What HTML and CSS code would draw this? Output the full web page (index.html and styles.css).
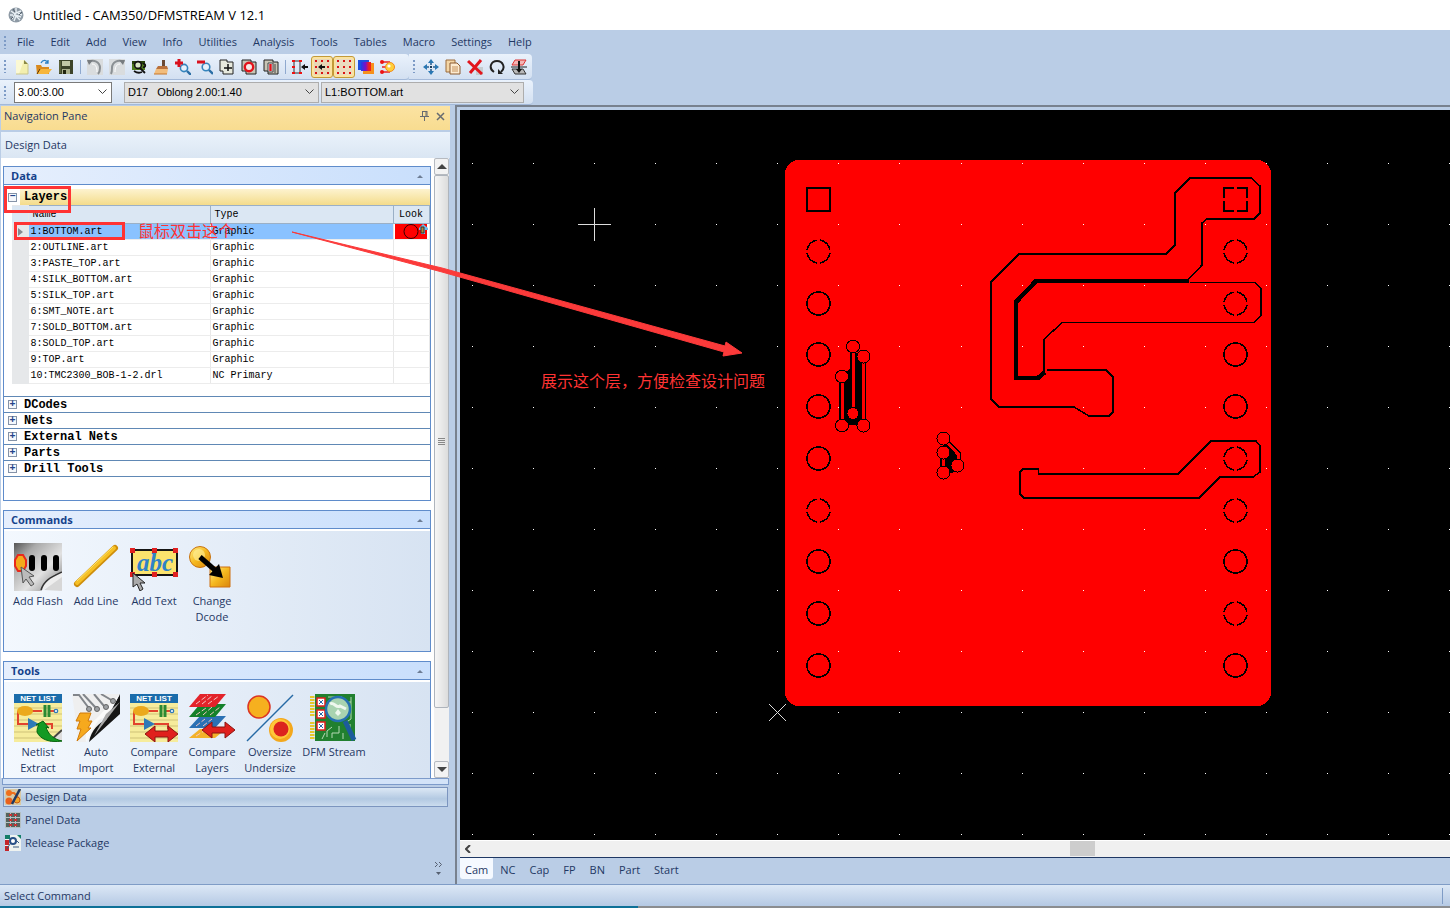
FILE: index.html
```
<!DOCTYPE html>
<html lang="en">
<head>
  <meta charset="UTF-8" />
  <meta name="viewport" content="width=device-width, initial-scale=1.0" />
  <title>Untitled - CAM350/DFMSTREAM V 12.1</title>
  <link rel="stylesheet" href="styles.css">
</head>
<body>
<div class="app">
  <header class="titlebar">
    <svg width="16" height="16" viewBox="0 0 16 16"><circle cx="8" cy="8" r="7.5" fill="#8e9aa5"/><path d="M3 4l4 3-3 5M8 1v5l5-2M7 8l6 2M6 14l2-5 4 4M2 8h3M10 6l4 2" stroke="#e9f0f5" stroke-width="1.4" fill="none"/><path d="M5 2l2 3M11 8l3-3M5 10l-2 2" stroke="#55616d" fill="none"/></svg>
    <span>Untitled - CAM350/DFMSTREAM V 12.1</span>
  </header>

  <nav class="menubar">
    <span class="grip"></span>
    <button>File</button><button>Edit</button><button>Add</button><button>View</button><button>Info</button><button>Utilities</button><button>Analysis</button><button>Tools</button><button>Tables</button><button>Macro</button><button>Settings</button><button>Help</button>
  </nav>

  <div class="toolrow">
    <div class="toolbar main-tools">
      <span class="grip"></span>
      <button aria-label="New"><svg viewBox="0 0 16 16"><path d="M2 1h8l4 4v10H2z" fill="#f3efae"/><path d="M2 1h8l-5 14H2z" fill="#fbf9d4"/><path d="M10 1l4 4h-4z" fill="#8a8845"/><path d="M14 5v10H2" fill="none" stroke="#c9c58c"/></svg></button>
      <button aria-label="Open"><svg viewBox="0 0 16 16"><path d="M0 6h5l1 2h7v7H1z" fill="#d98a1e"/><path d="M4 10h12l-4 5H1z" fill="#f7b63c"/><path d="M1 15l3-5" stroke="#5b3a08"/><path d="M5 4c2-4 6-3 7 0M12 1v3H9" fill="none" stroke="#2a7fc4" stroke-width="1.3"/></svg></button>
      <button aria-label="Save"><svg viewBox="0 0 16 16"><path d="M1 1h14v14H1z" fill="#3d4429"/><path d="M4 2h8v5H4z" fill="#c3c9a6"/><path d="M4 10h8v5H4z" fill="#aab08c"/><path d="M5 11h3v4H5z" fill="#20240f"/><path d="M2 2v12" stroke="#78804e"/></svg></button>
      <i class="sep"></i>
      <button aria-label="Undo"><svg viewBox="0 0 16 16"><path d="M0 0h16v16H0z" fill="#d9dcde"/><path d="M1 3c6-3 12 0 12 6 0 3-1 5-2 6" fill="none" stroke="#8b9094" stroke-width="2"/><path d="M0 1l6 0-4 5z" fill="#777c80"/><path d="M5 5c4 0 5 4 5 8" stroke="#fff" fill="none"/></svg></button>
      <button aria-label="Redo"><svg viewBox="0 0 16 16"><path d="M0 0h16v16H0z" fill="#d9dcde"/><path d="M15 3C9 0 3 3 3 9c0 3 0 4-1 6" fill="none" stroke="#8b9094" stroke-width="2"/><path d="M16 1l-6 0 4 5z" fill="#777c80"/><path d="M11 5c-4 0-5 4-5 8" stroke="#fff" fill="none"/></svg></button>
      <button aria-label="Find"><svg viewBox="0 0 16 16"><path d="M1 2h13v9H1z" fill="#4f7d1e"/><path d="M1 2h13v3H1z" fill="#27400d"/><circle cx="7" cy="6" r="3.4" fill="#d8e7c4" stroke="#111" stroke-width="1.6"/><path d="M9 9l5 5M12 5c3-1 3 4 0 3M3 12c3 2 6 2 8 1" stroke="#111" stroke-width="1.8" fill="none"/></svg></button>
      <button aria-label="Redraw"><svg viewBox="0 0 16 16"><path d="M9 1h3v7H9z" fill="#6b4a35"/><path d="M5 7h9l1 3H3z" fill="#b9713c"/><path d="M3 10h12l-1 5H1z" fill="#f2bd7c"/><path d="M1 15h13" stroke="#c4762e"/></svg></button>
      <button aria-label="Zoom in"><svg viewBox="0 0 16 16"><circle cx="9" cy="9" r="3.6" fill="#e5f1fb" stroke="#3585bd" stroke-width="1.6"/><path d="M12 12l4 4" stroke="#2a6ea5" stroke-width="2.4"/><path d="M4 0v8M0 4h8" stroke="#d9111d" stroke-width="3"/></svg></button>
      <button aria-label="Zoom out"><svg viewBox="0 0 16 16"><circle cx="9" cy="8" r="3.8" fill="#e5f1fb" stroke="#3585bd" stroke-width="1.6"/><path d="M12 11l4 4" stroke="#2a6ea5" stroke-width="2.4"/><path d="M0 3h8" stroke="#d9111d" stroke-width="3"/></svg></button>
      <button aria-label="Zoom window"><svg viewBox="0 0 16 16"><path d="M1 1h7v2h6v12H4v-3H1z" fill="#e7e9dd" stroke="#222"/><path d="M9 5v7M5 9h8" stroke="#111" stroke-width="1.5"/></svg></button>
      <button aria-label="Zoom all"><svg viewBox="0 0 16 16"><path d="M1 1h9v2h5v12H5v-3H1z" fill="#c8c5b5" stroke="#222"/><circle cx="8" cy="8" r="4.2" fill="#f6e9e5" stroke="#e3121a" stroke-width="2.4"/></svg></button>
      <button aria-label="Zoom previous"><svg viewBox="0 0 16 16"><path d="M1 1h9v2h5v12H5v-3H1z" fill="#c8c5b5" stroke="#222"/><path d="M5 4h5v9H5zM12 5v9" fill="#eee" stroke="#444"/><path d="M7.500 5v7" stroke="#e3121a" stroke-width="2.4"/></svg></button>
      <i class="sep"></i>
      <button aria-label="Snap object"><svg viewBox="0 0 16 16"><path d="M2 2v12M8 2v12M1 2h8M1 14h8" fill="none" stroke="#333"/><path d="M0 1h3v2H0zM7 1h3v2H7zM0 7h3v2H0zM0 13h3v2H0zM7 13h3v2H7z" fill="#e11"/><path d="M9 8l4-3v2h3v2h-3v2z" fill="#111"/></svg></button>
      <button class="on" aria-label="Snap grid"><svg viewBox="0 0 16 16"><path d="M0 0h16v16H0z" fill="#e8d6b6"/><path d="M1 2h14M1 8h14M1 14h14" stroke="#d91313" stroke-width="2" stroke-dasharray="2 4"/><path d="M4 8l4-3v2h3v2H8v2z" fill="#111"/></svg></button>
      <button class="on" aria-label="Grid"><svg viewBox="0 0 16 16"><path d="M0 0h16v16H0z" fill="#ecdcc0"/><path d="M1 2h14M1 8h14M1 14h14" stroke="#d91313" stroke-width="2" stroke-dasharray="2 4"/></svg></button>
      <button aria-label="Colors"><svg viewBox="0 0 16 16"><defs><linearGradient id="mix" x2="1"><stop stop-color="#1c3fe8"/><stop offset=".45" stop-color="#7a10c8"/><stop offset=".8" stop-color="#f0201c"/></linearGradient></defs><path d="M0 1h11v10H0z" fill="#1c4fe0"/><path d="M5 4h11v11H5z" fill="#f6911c"/><path d="M3 3h10v9H3z" fill="url(#mix)"/></svg></button>
      <button aria-label="Highlight"><svg viewBox="0 0 16 16"><path d="M2 3h8M2 13h8M2 8h6" stroke="#e22" stroke-width="1.6"/><circle cx="2" cy="3" r="2" fill="#e11"/><circle cx="2" cy="13" r="2" fill="#e11"/><circle cx="10" cy="8" r="4.500" fill="#ffcf3a" stroke="#f28a1c"/><circle cx="9" cy="7" r="1.6" fill="#fff"/></svg></button>
    </div>
    <div class="toolbar">
      <span class="grip"></span>
      <button aria-label="Move"><svg viewBox="0 0 16 16"><path d="M8 2v12M2 8h12" stroke="#2b6090" stroke-width="1.6" stroke-dasharray="4 4"/><path d="M8 0l3 4H5zM8 16l3-4H5zM0 8l4-3v6zM16 8l-4-3v6z" fill="#2977b3"/><path d="M7 7h2v2H7z" fill="#17395a"/></svg></button>
      <button aria-label="Copy"><svg viewBox="0 0 16 16"><path d="M1 1h9v12H1z" fill="#f4d6a6" stroke="#9a6a3a"/><path d="M5 4h7l3 3v8H5z" fill="#fdebd0" stroke="#8a5a30"/><path d="M7 8h6M7 10h6M7 12h6" stroke="#c5925c"/></svg></button>
      <button aria-label="Delete"><svg viewBox="0 0 16 16"><path d="M9 8h7v8H9z" fill="#c6ccd0"/><path d="M1 2l14 13M14 1L3 14" stroke="#e2151d" stroke-width="3"/></svg></button>
      <button aria-label="Rotate"><svg viewBox="0 0 16 16"><path d="M5 13C-1 9 2 2 8 2s9 7 4 11" fill="none" stroke="#222" stroke-width="2"/><path d="M9 10v5h5z" fill="#222"/></svg></button>
      <button aria-label="Mirror"><svg viewBox="0 0 16 16"><path d="M4 1h11l-3 5H1z" fill="#f3b5b5" stroke="#d33"/><path d="M0 8h16" stroke="#222"/><path d="M1 10h11l3 5H4z" fill="#b8b8b8" stroke="#333"/><path d="M8 2v10" stroke="#111" stroke-width="2"/><path d="M5 10h6l-3 4z" fill="#111"/></svg></button>
    </div>
  </div>

  <div class="toolrow">
    <div class="toolbar combos">
      <span class="grip"></span>
      <select class="combo grid-size" aria-label="Grid"><option>3.00:3.00</option></select>
      <select class="combo dcode" aria-label="Dcode"><option>D17 &nbsp; Oblong 2.00:1.40</option></select>
      <select class="combo layer" aria-label="Layer"><option>L1:BOTTOM.art</option></select>
    </div>
  </div>

  <main class="workspace">
    <aside class="pane">
      <div class="pane-title">
        <span>Navigation Pane</span>
        <button aria-label="Pin"><svg width="9" height="10" viewBox="0 0 9 10"><path d="M2.500 0v5M2 .5h5M6 0v5M7 0v5M0 5.500h9M4.500 6v4" stroke="#666b70" fill="none"/></svg></button>
        <button aria-label="Close"><svg width="9" height="9" viewBox="0 0 9 9"><path d="M1 1l7 7M8 1L1 8" stroke="#666b70" stroke-width="1.5"/></svg></button>
      </div>
      <div class="pane-sub">Design Data</div>

      <div class="pane-body">
        <div class="sections">
          <section class="section">
            <h2>Data<i class="fold"></i></h2>
            <div class="group open"><button class="toggle" aria-label="Collapse Layers">−</button><span>Layers</span></div>
            <table class="layers">
              <thead>
                <tr><th class="gutter"></th><th class="name">Name</th><th>Type</th><th class="look">Look</th></tr>
              </thead>
              <tbody>
                <tr class="selected"><td class="gutter"><i class="current"></i></td><td>1:BOTTOM.art</td><td>Graphic</td><td class="swatch"><svg width="33" height="15" viewBox="0 0 33 15"><path d="M0 0h32v15H0z" fill="#f00"/><circle cx="16" cy="7.500" r="7" fill="none" stroke="#300"/><path d="M24 4l4-4 5 4v2h-3v4h-4V6h-2z" fill="#6fb9e8"/><path d="M26 3h3v6h-3z" fill="#b08a3a" stroke="#333"/></svg></td></tr>
                <tr><td class="gutter"></td><td>2:OUTLINE.art</td><td>Graphic</td><td></td></tr>
                <tr><td class="gutter"></td><td>3:PASTE_TOP.art</td><td>Graphic</td><td></td></tr>
                <tr><td class="gutter"></td><td>4:SILK_BOTTOM.art</td><td>Graphic</td><td></td></tr>
                <tr><td class="gutter"></td><td>5:SILK_TOP.art</td><td>Graphic</td><td></td></tr>
                <tr><td class="gutter"></td><td>6:SMT_NOTE.art</td><td>Graphic</td><td></td></tr>
                <tr><td class="gutter"></td><td>7:SOLD_BOTTOM.art</td><td>Graphic</td><td></td></tr>
                <tr><td class="gutter"></td><td>8:SOLD_TOP.art</td><td>Graphic</td><td></td></tr>
                <tr><td class="gutter"></td><td>9:TOP.art</td><td>Graphic</td><td></td></tr>
                <tr><td class="gutter"></td><td>10:TMC2300_BOB-1-2.drl</td><td>NC Primary</td><td></td></tr>
              </tbody>
            </table>
            <div class="groups">
              <div class="group"><button class="toggle" aria-label="Expand DCodes">+</button><span>DCodes</span></div>
              <div class="group"><button class="toggle" aria-label="Expand Nets">+</button><span>Nets</span></div>
              <div class="group"><button class="toggle" aria-label="Expand External Nets">+</button><span>External Nets</span></div>
              <div class="group"><button class="toggle" aria-label="Expand Parts">+</button><span>Parts</span></div>
              <div class="group"><button class="toggle" aria-label="Expand Drill Tools">+</button><span>Drill Tools</span></div>
            </div>
          </section>

          <section class="section">
            <h2>Commands<i class="fold"></i></h2>
            <div class="tiles">
              <button class="tile">
                <svg viewBox="0 0 48 48"><defs><linearGradient id="steel" x2="1" y2="1"><stop stop-color="#555"/><stop offset=".25" stop-color="#aaa"/><stop offset=".6" stop-color="#e2e2e2"/><stop offset="1" stop-color="#777"/></linearGradient><linearGradient id="gold" x2="1" y2="1"><stop stop-color="#fff08a"/><stop offset=".5" stop-color="#f5b81e"/><stop offset="1" stop-color="#d9850d"/></linearGradient></defs><path d="M0 0h48v29L27 48H0z" fill="url(#steel)"/><path d="M48 28C43 32 35 30 27 47l21-8z" fill="#eee"/><path d="M27 47c3-9 8-12 21-18" fill="none" stroke="#333" stroke-width="1.500"/><path d="M30 47l18-13v14z" fill="#d7d7d7"/><path d="M4 12h5l3 5v6l-3 5H4l-3-5v-6z" fill="#f3aa1c" stroke="#e8291c" stroke-width="2"/><rect x="15" y="12" width="6" height="16" rx="3"/><rect x="27" y="12" width="6" height="16" rx="3"/><rect x="39" y="12" width="6" height="16" rx="3"/><path d="M7 24l13 9-5 1 5 7-3 2-5-7-3 4z" fill="#bbb" stroke="#555"/></svg>
                Add Flash
              </button>
              <button class="tile">
                <svg viewBox="0 0 48 48"><path d="M5 41L43 5" stroke="#ce8e0c" stroke-width="6" stroke-linecap="round"/><path d="M5 40L42 5" stroke="#f6c025" stroke-width="4" stroke-linecap="round"/><path d="M5 38L41 4" stroke="#fae06a"/></svg>
                Add Line
              </button>
              <button class="tile">
                <svg viewBox="0 0 48 48"><path d="M2 7h45v25H2z" fill="#fbe36d" stroke="#151515" stroke-width="2"/><path d="M0 5h5v5H0zM22 5h5v5h-5zM43 5h5v5h-5zM0 29h5v5H0zM22 29h5v5h-5zM43 29h5v5h-5z" fill="#e02020"/><text x="7" y="28" font-family="Liberation Serif" font-size="25" font-style="italic" font-weight="bold" fill="#2f82c8">abc</text><path d="M3 30v14l4-3 3 7 3-2-3-6h5z" fill="#aaa" stroke="#222"/></svg>
                Add Text
              </button>
              <button class="tile">
                <svg viewBox="0 0 48 48"><path d="M22 24h20v20H22z" fill="url(#gold)" stroke="#ce7110"/><circle cx="12" cy="14" r="10.500" fill="url(#gold)" stroke="#c9730f"/><circle cx="11" cy="12" r="6" fill="#fff3a0" opacity=".6"/><path d="M12 14l16 14" stroke="#000" stroke-width="5"/><path d="M35 35l-4-14-10 11z"/></svg>
                Change Dcode
              </button>
            </div>
          </section>

          <section class="section">
            <h2>Tools<i class="fold"></i></h2>
            <div class="tiles">
              <button class="tile">
                <svg viewBox="0 0 48 48"><g id="netlist"><path d="M0 0h48v48H0z" fill="#f6ec9c"/><path d="M0 14h48M0 20h48M0 26h48M0 32h48M0 38h48M0 44h48" stroke="#cfc278"/><path d="M0 0h48v9H0z" fill="#1a6cab"/><text x="24" y="7" text-anchor="middle" font-family="Liberation Sans" font-size="8" font-weight="bold" fill="#fff">NET LIST</text><path d="M4 17h24M4 17v13h10M24 30h14v5" fill="none" stroke="#e2442d" stroke-width="2"/><path d="M36 17h6" stroke="#e2442d" stroke-width="2"/><ellipse cx="11" cy="17" rx="8" ry="5" fill="#eba91d"/><path d="M31 11v12M35 11v12" stroke="#2b8a32" stroke-width="3"/><path d="M14 24l11 6-11 6z" fill="#2f79b8"/><circle cx="42" cy="17" r="1.700" fill="#fff" stroke="#2f79b8" stroke-width="1.300"/></g><path d="M48 37v11H36z" fill="#ddd"/><path d="M36 47L48 36" stroke="#444" stroke-width="2"/><path d="M23 38c0-4 1-6 2-7h-3l7-4 6 7-3-1c2 7 7 12 16 14-13 2-22-2-25-9z" fill="#139a23" stroke="#08650f"/></svg>
                Netlist Extract
              </button>
              <button class="tile">
                <svg viewBox="0 0 48 48"><path d="M0 0h48L14 48H6l-2-20z" fill="#efefef"/><path d="M48 0v20L17 48c2-12 11-20 17-22z" fill="#151515"/><path d="M48 0L34 25c-9-5-13 14-20 23-2-12 6-20 10-23z" fill="#fafafa"/><path d="M48 8L22 42l12-22z" fill="#aaa"/><path d="M1 1h6l9 12M11 0l13 14M22 0l10 12M29 0l12 7" fill="none" stroke="#81858a" stroke-width="2"/><g fill="#9da0a4" stroke="#666"><circle cx="17" cy="15" r="2.500"/><circle cx="25" cy="15" r="2.500"/><circle cx="34" cy="13" r="2.500"/><circle cx="41" cy="7" r="2.500"/></g><path d="M8 19h11l-3 8h4l-4 7h3L5 47l4-12H5l3-8H4z" fill="#f6a91d" stroke="#d07b0b"/></svg>
                Auto Import
              </button>
              <button class="tile">
                <svg viewBox="0 0 48 48"><use href="#netlist"/><path d="M15 40l10-8v5h13v-5l10 8-10 8v-5H25v5z" fill="#e0201d" stroke="#8a1411"/></svg>
                Compare External
              </button>
              <button class="tile">
                <svg viewBox="0 0 48 48"><path d="M12 35h26L27 44H1z" fill="#f3b22a"/><path d="M12 22h26L27 34H1z" fill="#2b71b4"/><path d="M12 10h26L27 23H1z" fill="#14812a"/><path d="M12 0h26L27 13H1z" fill="#e3232a"/><path d="M8 10L20 1M14 10l10-8M20 10l11-8M8 21l10-7M15 21l9-8M22 21l10-8M8 32l9-7M15 32l9-7M8 42l8-5" fill="none" stroke="#f4c6c3" stroke-width="1" stroke-dasharray="5 2"/><path d="M14 36l10-8v5h13v-5l10 8-10 8v-5H24v5z" fill="#e0201d" stroke="#8a1411"/></svg>
                Compare Layers
              </button>
              <button class="tile">
                <svg viewBox="0 0 48 48"><path d="M1 47L47 1" stroke="#266aa5" stroke-width="1.500"/><circle cx="13" cy="13" r="11" fill="#f6b01f" stroke="#dc3523" stroke-width="1.500"/><circle cx="35" cy="36" r="12" fill="#f3a81d"/><circle cx="34" cy="35" r="10" fill="#ffc73a"/><circle cx="35" cy="35" r="7.500" fill="#dc231e"/></svg>
                Oversize Undersize
              </button>
              <button class="tile wide">
                <svg viewBox="0 0 48 48"><path d="M5 0h40v47H5z" fill="#21802f"/><path d="M2 2v20M2 28v18" stroke="#e6c92b" stroke-width="5" stroke-dasharray="2 1"/><path d="M18 3h9v5M31 2v6h10M41 3v22l-6 4M17 43v-6l5-4M22 44v-5h7v-7M33 45v-6M12 45l3-6M40 30v8" fill="none" stroke="#b5d8b5"/><path d="M7 4h8v8H7zM7 16h8v8H7zM7 28h8v8H7z" fill="#fff" stroke="#e01f1f" stroke-width="1.500"/><path d="M9 6l4 4M13 6l-4 4M9 18l4 4M13 18l-4 4M9 30l4 4M13 30l-4 4" stroke="#2a66a8"/><path d="M35 27l9 19" stroke="#1c5c9c" stroke-width="5"/><circle cx="28" cy="15" r="12" fill="#a8d3b0" stroke="#2470b2" stroke-width="2.500"/><path d="M20 10c4-3 6 5 10 2l6 3" fill="none" stroke="#eef8ee" stroke-width="3"/><path d="M28 15l3 4-3 3-3-3z" fill="#eef8ee"/></svg>
                DFM Stream
              </button>
            </div>
          </section>
        </div>
        <div class="vscroll">
          <button aria-label="Scroll up"><i class="tri up"></i></button>
          <span class="vthumb"></span>
          <button aria-label="Scroll down"><i class="tri down"></i></button>
        </div>
      </div>

      <div class="splitter"></div>
      <div class="pane-nav">
        <button class="active"><svg viewBox="0 0 16 16"><path d="M0 0h16v16H0z" fill="#d8c9a4"/><circle cx="4" cy="4" r="3" fill="#ee6f1d"/><circle cx="4" cy="12" r="3.500" fill="#e9601c"/><circle cx="12" cy="11" r="3" fill="#f2a52a" stroke="#c85a0d"/><path d="M5 4h4l4 4" stroke="#ee6f1d" stroke-width="2" fill="none"/><path d="M15 0L7 15" stroke="#203a62" stroke-width="2.500"/></svg>Design Data</button>
        <button><svg viewBox="0 0 16 16"><path d="M0 0h16v16H0z" fill="#b4bfc2"/><path d="M1 1h4v4H1zM6 1h4v4H6zM11 1h4v4h-4zM1 6h4v4H1zM6 6h4v4H6zM11 6h4v4h-4zM1 11h4v4H1zM6 11h4v4H6zM11 11h4v4h-4z" fill="#56635f"/><path d="M4 3h3M9 3h3M4 8h3M9 8h3M4 13h3M9 13h3" stroke="#c73131" stroke-width="2"/></svg>Panel Data</button>
        <button><svg viewBox="0 0 16 16"><path d="M0 0h16v16H0z" fill="#eef2f0"/><path d="M0 0h5v4H0zM12 0h4v4z" fill="#137d68"/><path d="M2 5v11" stroke="#c4242b" stroke-width="4" stroke-dasharray="5 1"/><circle cx="8" cy="6" r="3" fill="#fff" stroke="#284f86" stroke-width="2"/><path d="M5 9l-3 5M8 12h6M10 4l4 4" stroke="#395a80"/></svg>Release Package</button>
        <div class="more"><svg width="9" height="14" viewBox="0 0 9 14"><path d="M1 1l2.500 2.500L1 6M5 1l2.500 2.500L5 6" fill="none" stroke="#566071"/><path d="M2 11h5l-2.500 3z" fill="#566071"/></svg></div>
      </div>
    </aside>

    <section class="viewer">
      <svg class="board">
        <defs>
          <pattern id="dots" x="472" y="163" width="61" height="61" patternUnits="userSpaceOnUse"><path d="M0 0h1v1H0z" fill="#fff"/></pattern>
          <pattern id="dots-right" x="473" y="163" width="61" height="61" patternUnits="userSpaceOnUse"><path d="M0 0h1v1H0z" fill="#fff"/></pattern>
          <circle id="pad" r="11.500" fill="none" stroke="#000" stroke-width="1.500"/>
          <circle id="thermal" r="11.500" fill="none" stroke="#000" stroke-width="1.500" stroke-dasharray="15 3.070" stroke-dashoffset="-1.500"/>
        </defs>
        <g transform="translate(-460 -110)">
          <rect x="785" y="160" width="486" height="546" rx="14" fill="#f00"/>
          <rect x="460" y="110" width="470" height="1000" fill="url(#dots)"/>
          <rect x="930" y="110" width="2000" height="1000" fill="url(#dots-right)"/>

          <!-- left header -->
          <path d="M807 188h23v23h-23z" fill="none" stroke="#000" stroke-width="1.500"/>
          <use href="#thermal" x="818.500" y="251.500"/>
          <use href="#pad" x="818.500" y="303.500"/>
          <use href="#pad" x="818.500" y="354.500"/>
          <use href="#pad" x="818.500" y="406.500"/>
          <use href="#pad" x="818.500" y="458.500"/>
          <use href="#thermal" x="818.500" y="510.500"/>
          <use href="#pad" x="818.500" y="561.500"/>
          <use href="#pad" x="818.500" y="613.500"/>
          <use href="#pad" x="818.500" y="665.500"/>

          <!-- right header -->
          <path d="M1234 188h-10v10M1237 188h10v10M1234 211h-10v-10M1237 211h10v-10" fill="none" stroke="#000" stroke-width="1.500"/>
          <use href="#thermal" x="1235.500" y="251.500"/>
          <use href="#thermal" x="1235.500" y="303.500"/>
          <use href="#pad" x="1235.500" y="354.500"/>
          <use href="#pad" x="1235.500" y="406.500"/>
          <use href="#thermal" x="1235.500" y="458.500"/>
          <use href="#thermal" x="1235.500" y="510.500"/>
          <use href="#pad" x="1235.500" y="561.500"/>
          <use href="#thermal" x="1235.500" y="613.500"/>
          <use href="#pad" x="1235.500" y="665.500"/>

          <!-- power traces -->
          <g fill="none" stroke="#000" stroke-width="1.500">
            <path d="M1188 280l14-15v-42l5-4h47l6-6v-27l-9-8h-61l-15 15v52l-9 9h-147l-28 28v117l8 8h75l15 9h20l4-4v-35l-7-7h-59"/>
            <path d="M1190 282.500h65l6 6v27l-7 7h-192l-18 17v32l-6 6"/>
            <path d="M1189 281h-153l-20 21v76h22l7-6" stroke-width="4.500"/>
            <path d="M1039 474h139l33-33h45l4 5v26l-7 5h-33l-21 21h-175l-4-4v-22l3-3h15z"/>
          </g>

          <!-- left jumper cluster -->
          <path d="M851 353h5l9 8v60l-5 4h-14l-6-5v-42l10-10z"/>
          <path d="M842 377v48M853 347v66M863 356v69" stroke="#000" stroke-width="6"/>
          <path d="M842 377v48M853 347v66M863 356v69" stroke="#f00" stroke-width="3"/>
          <g fill="#f00" stroke="#000"><circle cx="853" cy="346.500" r="6.500"/><circle cx="863.500" cy="356.500" r="6.500"/><circle cx="842" cy="376.500" r="6.500"/><circle cx="853" cy="413.500" r="6"/><circle cx="842" cy="425.500" r="6.500"/><circle cx="863.500" cy="425.500" r="6.500"/></g>

          <!-- centre jumper cluster -->
          <path d="M943 445h8l9 10v12l-8 6h-9z"/>
          <path d="M943 438l15 16v10M943 452v20" fill="none" stroke="#000" stroke-width="6"/>
          <path d="M943 438l15 16v10M943 452v20" fill="none" stroke="#f00" stroke-width="3"/>
          <g fill="#f00" stroke="#000"><circle cx="943.500" cy="438.500" r="6.500"/><circle cx="943.500" cy="452.500" r="6.500"/><circle cx="957.500" cy="465.500" r="6.500"/><circle cx="943.500" cy="472.500" r="6.500"/></g>

          <path d="M578 224.500h33M594.500 208v33M769 704l17 17M786 704l-17 17" stroke="#ddd"/>
        </g>
      </svg>
      <div class="hscroll"><button aria-label="Scroll left"><svg width="6" height="8" viewBox="0 0 6 8"><path d="M5 0L1 4l4 4" fill="none" stroke="#444" stroke-width="2"/></svg></button><span class="track"><span class="hthumb"></span></span></div>
      <div class="tabs">
        <button class="active">Cam</button><button>NC</button><button>Cap</button><button>FP</button><button>BN</button><button>Part</button><button>Start</button>
      </div>
    </section>
  </main>

  <footer class="statusbar">Select Command<i class="end"></i></footer>
  <div class="desktop-edge"></div>

  <!-- markup notes over the window -->
  <div class="mark mark-layers"></div>
  <div class="mark mark-bottom"></div>
  <div class="note note-click">鼠标双击这个</div>
  <div class="note note-view">展示这个层，方便检查设计问题</div>
  <svg class="arrow" width="452" height="130" viewBox="0 0 452 130"><path d="M1 1l150 36 283 78 1-4 16 11-19 3 1-4L151 41z" fill="#fb3a3a" stroke="#fb3a3a"/></svg>
</div>
</body>
</html>
```
FILE: styles.css
```
* {
  box-sizing: border-box;
}

body {
  margin: 0;
  font-family: "Open Sans", "Noto Sans", sans-serif;
  font-size: 11px;
  line-height: 16px;
  color: #1f3864;
}

button {
  font: inherit;
  color: inherit;
  background: none;
  border: 0;
  padding: 0;
}

svg {
  display: block;
  flex-shrink: 0;
}

.app {
  position: relative;
  display: flex;
  flex-direction: column;
  height: 100vh;
  overflow: hidden;
  background: #bacde6;
}

.titlebar {
  display: flex;
  align-items: center;
  gap: 9px;
  height: 30px;
  padding-left: 8px;
  background: #fff;
  color: #000;
  font-size: 13px;
}

.menubar {
  display: flex;
  align-items: center;
  height: 24px;
}

.menubar button {
  padding: 0 8px;
}

.grip {
  width: 3px;
  height: 13px;
  margin: 0 4px;
  background: repeating-linear-gradient(#7d9bc6 0 2px, transparent 2px 4px);
  background-size: 2px 13px;
  background-repeat: no-repeat;
}

.menubar .grip {
  margin-right: 2px;
}

/* toolbars */
.toolrow {
  display: flex;
  height: 25px;
}

.menubar + .toolrow {
  height: 26px;
}

.toolbar {
  display: flex;
  align-items: center;
  padding-right: 2px;
  background: linear-gradient(#eaf2fc, #d3e0f1);
  border-bottom: 1px solid #a3b9d9;
  border-radius: 0 4px 4px 0;
}

.main-tools {
  padding-right: 10px;
}

.toolbar button {
  display: flex;
  align-items: center;
  justify-content: center;
  width: 22px;
  height: 22px;
}

.toolbar button svg {
  width: 16px;
  height: 16px;
}

.toolbar .on {
  background: #fbe3a0;
  border: 1px solid #c39a38;
  border-radius: 3px;
}

.sep {
  width: 1px;
  height: 14px;
  margin: 0 3px;
  background: #8fa9cf;
}

.combos {
  padding-right: 9px;
}

.combo {
  appearance: none;
  height: 21px;
  padding: 0 3px;
  border: 1px solid #adadad;
  border-radius: 0;
  background: #e1e1e1 url("data:image/svg+xml,%3Csvg xmlns='http://www.w3.org/2000/svg' width='9' height='6'%3E%3Cpath d='M.5.5l4 4 4-4' fill='none' stroke='%23444'/%3E%3C/svg%3E") no-repeat right 4px center;
  color: #000;
  font-family: "Liberation Sans", sans-serif;
  font-size: 11px;
}

.grid-size {
  width: 98px;
  margin-left: 3px;
  margin-right: 12px;
  background-color: #fff;
  border-color: #7a7a7a;
}

.dcode {
  width: 195px;
  margin-right: 2px;
}

.layer {
  width: 203px;
}

/* main area */
.workspace {
  display: flex;
  flex: 1;
  min-height: 0;
  gap: 5px;
}

.pane {
  display: flex;
  flex-direction: column;
  width: 450px;
  padding: 1px 0 0 1px;
}

.pane-title {
  display: flex;
  align-items: center;
  gap: 7px;
  height: 24px;
  padding: 0 5px 4px 3px;
  background: linear-gradient(#fbe3a2, #f8dc90);
}

.pane-title span {
  flex: 1;
}

.pane-sub {
  height: 26px;
  margin-top: 2px;
  padding: 5px 4px;
  background: linear-gradient(#eaf2fb, #dae6f3);
}

.pane-body {
  display: flex;
  flex: 1;
  min-height: 0;
  margin-right: 1px;
  background: #fff;
}

.sections {
  flex: 1;
  overflow: hidden;
  padding: 8px 3px 0 2px;
}

.section {
  margin-bottom: 9px;
  border: 1px solid #5f8ccb;
}

.section h2 {
  display: flex;
  align-items: center;
  justify-content: space-between;
  height: 18px;
  margin: 0;
  padding: 1px 7px 0;
  border-bottom: 1px solid #5f8ccb;
  background: linear-gradient(90deg, #e6effd, #c9dffc);
  color: #15428b;
  font-size: 11px;
  font-weight: bold;
}

.fold {
  border: 3px solid transparent;
  border-top: 0;
  border-bottom: 3px solid #6d7d94;
}

.group {
  display: flex;
  align-items: center;
  height: 16px;
  padding-left: 4px;
  border-bottom: 1px solid #6088b5;
  color: #000;
  font-family: "Liberation Mono", monospace;
  font-size: 12px;
  font-weight: bold;
}

.group.open {
  margin-top: 4px;
  border-bottom: 0;
  background: linear-gradient(#fdf3cf, #f4dc8b) 16px 0 no-repeat;
}

.toggle {
  width: 9px;
  height: 9px;
  margin-right: 7px;
  border: 1px solid #8593a8;
  background: #f5f8fc;
  color: #24448a;
  line-height: 6px;
  font-size: 10px;
}

.layers {
  width: calc(100% - 8px);
  margin-left: 8px;
  border-collapse: collapse;
  table-layout: fixed;
  color: #000;
  font-family: "Liberation Mono", monospace;
  font-size: 10px;
}

.layers th {
  height: 18px;
  padding: 0 4px;
  background: #dbe7f3;
  border-top: 1px solid #9bb0c6;
  border-right: 1px solid #9bb0c6;
  border-bottom: 1px solid #9bb0c6;
  font-weight: normal;
  text-align: left;
}

.layers td {
  height: 16px;
  padding: 0 2px;
  line-height: 14px;
  border-right: 1px solid #e8e8e8;
  border-bottom: 1px solid #ececec;
}

.layers .gutter {
  width: 16px;
  padding: 0 4px;
  background: #e6e8ea;
  border-color: #e6e8ea;
}

.layers th.gutter {
  background: #dbe7f3;
}

.layers .name {
  width: 182px;
}

.layers .look {
  width: 36px;
  padding: 0 5px;
}

.layers .selected td {
  background: #8ac2ff;
}

.layers .selected .gutter {
  background: #e6e8ea;
}

.layers .selected .swatch {
  padding: 0 1px;
  background: #fff;
}

.current {
  display: block;
  width: 0;
  margin-left: 2px;
  border: 4px solid transparent;
  border-left: 5px solid #858a90;
  border-right: 0;
}

.groups {
  height: 104px;
  margin-top: 12px;
  border-top: 1px solid #6088b5;
}

.tiles {
  display: flex;
  align-items: flex-start;
  height: 120px;
  margin-top: 2px;
  padding: 12px 5px;
  background: linear-gradient(90deg, #f3f8fe, #d7e3f2);
}

.tile {
  display: flex;
  flex-direction: column;
  align-items: center;
  gap: 2px;
  width: 58px;
}

.tile.wide {
  width: 70px;
}

.tile svg {
  width: 48px;
  height: 48px;
}

.vscroll {
  display: flex;
  flex-direction: column;
  width: 15px;
  background: #f1f1f1;
}

.vscroll button {
  display: flex;
  align-items: center;
  justify-content: center;
  height: 17px;
  border: 1px solid #b6bac0;
  border-radius: 2px;
  background: #f3f3f3;
}

.vscroll button:last-child {
  margin-top: auto;
}

.tri {
  border: 5px solid transparent;
}

.tri.up {
  border-top: 0;
  border-bottom: 5px solid #444;
}

.tri.down {
  border-bottom: 0;
  border-top: 5px solid #444;
}

.vthumb {
  height: 86%;
  border: 1px solid #aeb4bc;
  border-radius: 2px;
  background:
    repeating-linear-gradient(#888 0 1px, transparent 1px 2px) center / 7px 7px no-repeat,
    linear-gradient(90deg, #f6f6f6, #dcdcdc);
}

.splitter {
  height: 7px;
  margin: 0 1px;
  border: 1px solid #7d9bca;
  background: #d3e3f8;
}

.pane-nav {
  display: flex;
  flex-direction: column;
  gap: 3px;
  height: 99px;
  padding: 2px 2px 0;
}

.pane-nav button {
  display: flex;
  align-items: center;
  gap: 4px;
  height: 20px;
  padding: 0 2px;
}

.pane-nav button svg {
  width: 16px;
  height: 16px;
}

.pane-nav .active {
  border: 1px solid #7c95bf;
  padding: 0 1px;
  background: linear-gradient(#dce8f5, #b3c9e2 60%, #cbdcee);
}

.more {
  align-self: flex-end;
  margin-top: 5px;
  padding-right: 5px;
}

/* design view */
.viewer {
  display: flex;
  flex-direction: column;
  flex: 1;
  min-width: 0;
  padding: 3px 0 0 3px;
  border-top: 2px solid #78818e;
  border-left: 2px solid #78818e;
}

.board {
  flex: 1;
  width: 100%;
  min-height: 0;
  background: #000;
  shape-rendering: crispEdges;
}

.hscroll {
  display: flex;
  height: 18px;
  border-top: 1px solid #fff;
  border-bottom: 1px solid #1f3864;
  background: #f0f0f0;
}

.hscroll button {
  padding: 0 5px;
}

.track {
  flex: 1;
}

.hthumb {
  display: block;
  width: 25px;
  height: 15px;
  margin-left: 61%;
  background: #cdcdcd;
}

.tabs {
  display: flex;
  height: 26px;
  padding-bottom: 5px;
}

.tabs button {
  padding: 2px 6px 0;
  border: 1px solid transparent;
}

.tabs .active {
  padding: 2px 4px 0;
  background: #f5f9ff;
  border-radius: 0 0 3px 3px;
}

.statusbar {
  display: flex;
  align-items: center;
  height: 22px;
  padding: 0 7px 0 4px;
  border-top: 1px solid #7f9cc6;
  background: linear-gradient(#dce8f6, #b5c9e4);
}

.end {
  width: 1px;
  height: 16px;
  margin-left: auto;
  background: #7f9cc6;
}

.desktop-edge {
  height: 2px;
  background: linear-gradient(90deg, #0d7097 44%, #8b8d90 44%);
}

/* markup */
.mark {
  position: absolute;
  border: 3px solid #f33;
}

.mark-layers {
  left: 4px;
  top: 186px;
  width: 67px;
  height: 27px;
}

.mark-bottom {
  left: 14px;
  top: 222px;
  width: 111px;
  height: 18px;
}

.note {
  position: absolute;
  color: #f33;
  font-family: "Noto Sans CJK SC", sans-serif;
  font-size: 16px;
  font-weight: 400;
  line-height: 20px;
}

.note-click {
  left: 138px;
  top: 220px;
}

.note-view {
  left: 541px;
  top: 370px;
}

.arrow {
  position: absolute;
  left: 291px;
  top: 231px;
}
```
